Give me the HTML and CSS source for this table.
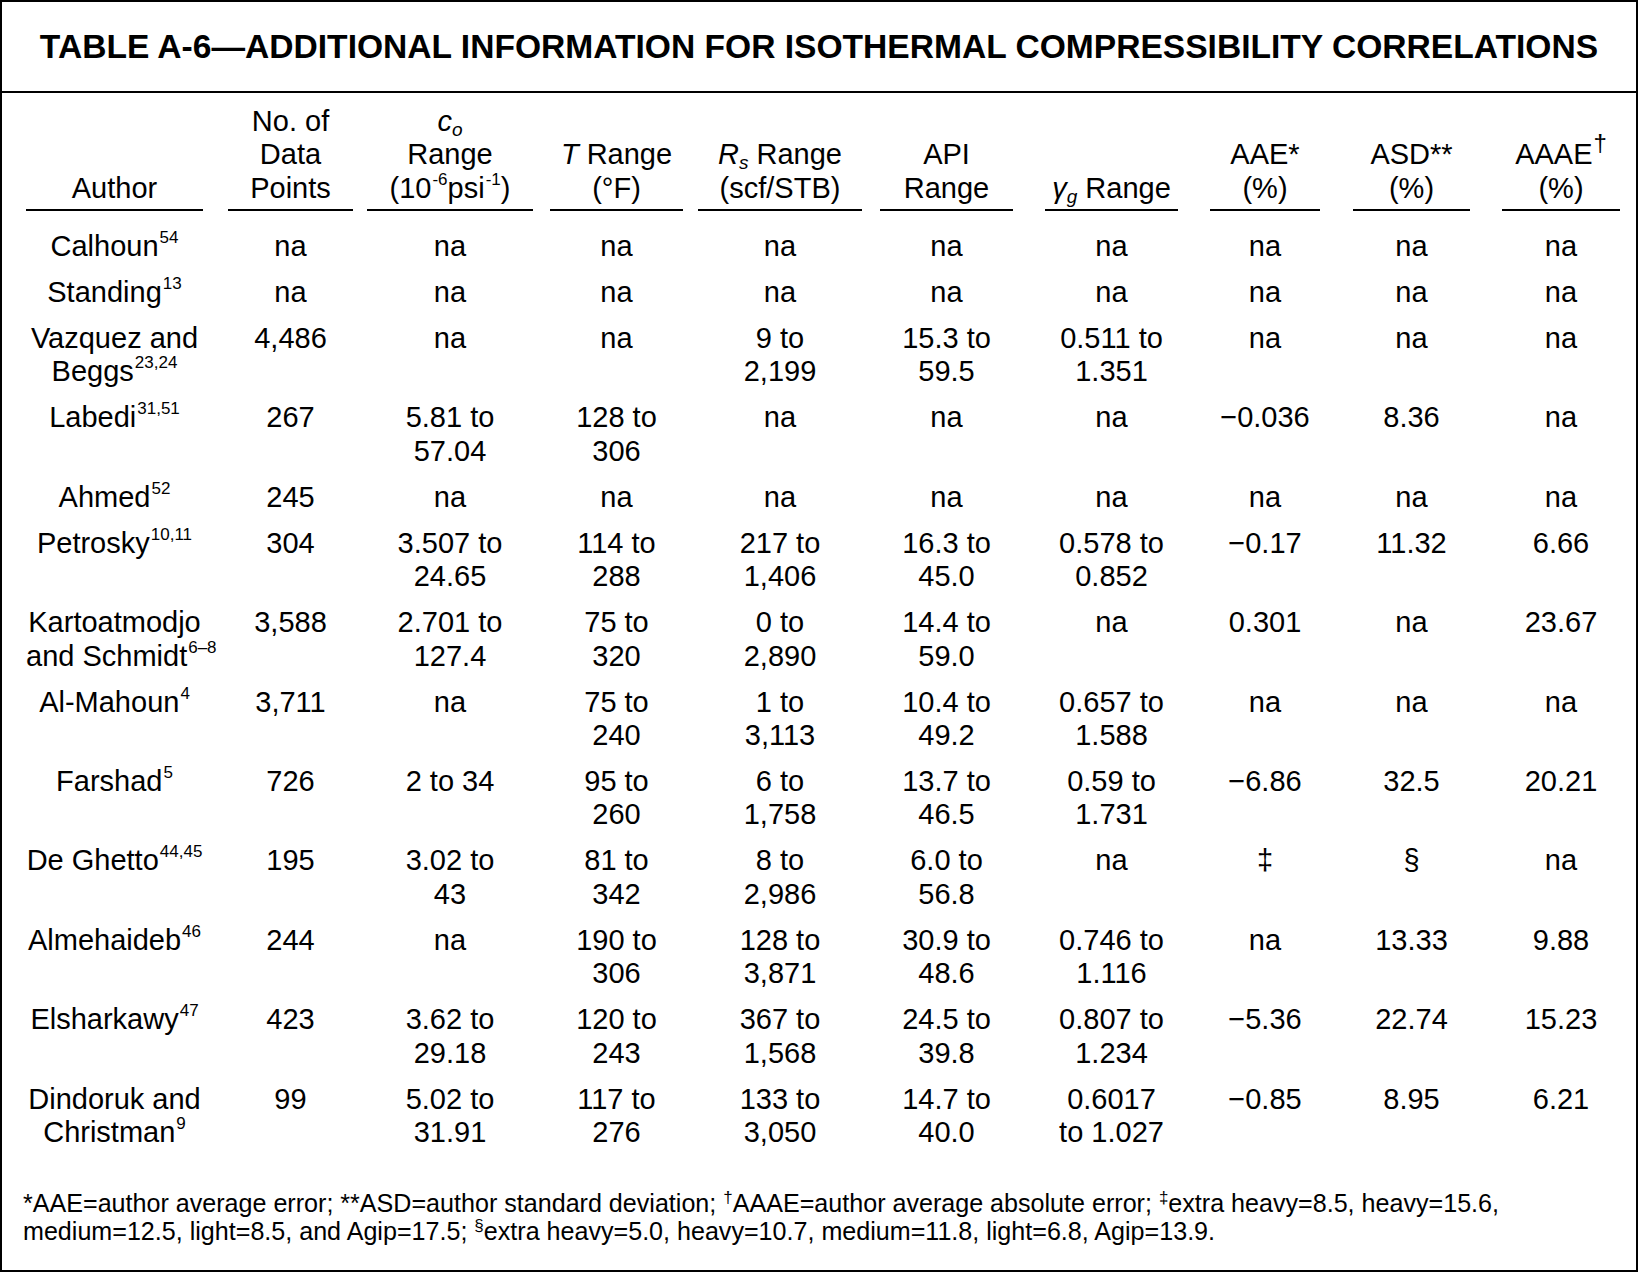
FILE: index.html
```html
<!DOCTYPE html>
<html lang="en">

<head>
    <meta charset="UTF-8">
    <title>Table A-6 - Isothermal Compressibility Correlations</title>
    <link rel="stylesheet" href="styles.css">
</head>

<body>
    <div class="sheet">
        <h1 class="sheet-title">TABLE A-6—ADDITIONAL INFORMATION FOR ISOTHERMAL COMPRESSIBILITY CORRELATIONS</h1>

        <div class="sheet-table">
            <table class="data">
                <colgroup>
                    <col class="c-author">
                    <col class="c-points">
                    <col class="c-co">
                    <col class="c-t">
                    <col class="c-rs">
                    <col class="c-api">
                    <col class="c-gamma">
                    <col class="c-aae">
                    <col class="c-asd">
                    <col class="c-aaae">
                </colgroup>
                <thead>
                    <tr>
                        <th><div class="hd">Author</div></th>
                        <th><div class="hd">No. of<br>Data<br>Points</div></th>
                        <th><div class="hd"><i>c<sub>o</sub></i><br>Range<br>(10<sup>-6</sup>psi<sup>-1</sup>)</div></th>
                        <th><div class="hd"><i>T</i> Range<br>(°F)</div></th>
                        <th><div class="hd"><i>R<sub>s</sub></i> Range<br>(scf/STB)</div></th>
                        <th><div class="hd">API<br>Range</div></th>
                        <th><div class="hd"><i>γ<sub>g</sub></i> Range</div></th>
                        <th><div class="hd">AAE*<br>(%)</div></th>
                        <th><div class="hd">ASD**<br>(%)</div></th>
                        <th><div class="hd">AAAE<sup class="mark">†</sup><br>(%)</div></th>
                    </tr>
                </thead>
                <tbody>
                    <tr>
                        <td>Calhoun<sup>54</sup></td>
                        <td>na</td><td>na</td><td>na</td><td>na</td><td>na</td><td>na</td><td>na</td><td>na</td><td>na</td>
                    </tr>
                    <tr>
                        <td>Standing<sup>13</sup></td>
                        <td>na</td><td>na</td><td>na</td><td>na</td><td>na</td><td>na</td><td>na</td><td>na</td><td>na</td>
                    </tr>
                    <tr>
                        <td>Vazquez and<br>Beggs<sup>23,24</sup></td>
                        <td>4,486</td>
                        <td>na</td>
                        <td>na</td>
                        <td>9 to<br>2,199</td>
                        <td>15.3 to<br>59.5</td>
                        <td>0.511 to<br>1.351</td>
                        <td>na</td>
                        <td>na</td>
                        <td>na</td>
                    </tr>
                    <tr>
                        <td>Labedi<sup>31,51</sup></td>
                        <td>267</td>
                        <td>5.81 to<br>57.04</td>
                        <td>128 to<br>306</td>
                        <td>na</td>
                        <td>na</td>
                        <td>na</td>
                        <td>−0.036</td>
                        <td>8.36</td>
                        <td>na</td>
                    </tr>
                    <tr>
                        <td>Ahmed<sup>52</sup></td>
                        <td>245</td>
                        <td>na</td><td>na</td><td>na</td><td>na</td><td>na</td><td>na</td><td>na</td><td>na</td>
                    </tr>
                    <tr>
                        <td>Petrosky<sup>10,11</sup></td>
                        <td>304</td>
                        <td>3.507 to<br>24.65</td>
                        <td>114 to<br>288</td>
                        <td>217 to<br>1,406</td>
                        <td>16.3 to<br>45.0</td>
                        <td>0.578 to<br>0.852</td>
                        <td>−0.17</td>
                        <td>11.32</td>
                        <td>6.66</td>
                    </tr>
                    <tr>
                        <td>Kartoatmodjo<br>and Schmidt<sup>6–8</sup></td>
                        <td>3,588</td>
                        <td>2.701 to<br>127.4</td>
                        <td>75 to<br>320</td>
                        <td>0 to<br>2,890</td>
                        <td>14.4 to<br>59.0</td>
                        <td>na</td>
                        <td>0.301</td>
                        <td>na</td>
                        <td>23.67</td>
                    </tr>
                    <tr>
                        <td>Al-Mahoun<sup>4</sup></td>
                        <td>3,711</td>
                        <td>na</td>
                        <td>75 to<br>240</td>
                        <td>1 to<br>3,113</td>
                        <td>10.4 to<br>49.2</td>
                        <td>0.657 to<br>1.588</td>
                        <td>na</td>
                        <td>na</td>
                        <td>na</td>
                    </tr>
                    <tr>
                        <td>Farshad<sup>5</sup></td>
                        <td>726</td>
                        <td>2 to 34</td>
                        <td>95 to<br>260</td>
                        <td>6 to<br>1,758</td>
                        <td>13.7 to<br>46.5</td>
                        <td>0.59 to<br>1.731</td>
                        <td>−6.86</td>
                        <td>32.5</td>
                        <td>20.21</td>
                    </tr>
                    <tr>
                        <td>De Ghetto<sup>44,45</sup></td>
                        <td>195</td>
                        <td>3.02 to<br>43</td>
                        <td>81 to<br>342</td>
                        <td>8 to<br>2,986</td>
                        <td>6.0 to<br>56.8</td>
                        <td>na</td>
                        <td>‡</td>
                        <td>§</td>
                        <td>na</td>
                    </tr>
                    <tr>
                        <td>Almehaideb<sup>46</sup></td>
                        <td>244</td>
                        <td>na</td>
                        <td>190 to<br>306</td>
                        <td>128 to<br>3,871</td>
                        <td>30.9 to<br>48.6</td>
                        <td>0.746 to<br>1.116</td>
                        <td>na</td>
                        <td>13.33</td>
                        <td>9.88</td>
                    </tr>
                    <tr>
                        <td>Elsharkawy<sup>47</sup></td>
                        <td>423</td>
                        <td>3.62 to<br>29.18</td>
                        <td>120 to<br>243</td>
                        <td>367 to<br>1,568</td>
                        <td>24.5 to<br>39.8</td>
                        <td>0.807 to<br>1.234</td>
                        <td>−5.36</td>
                        <td>22.74</td>
                        <td>15.23</td>
                    </tr>
                    <tr>
                        <td>Dindoruk and<br>Christman<sup>9</sup></td>
                        <td>99</td>
                        <td>5.02 to<br>31.91</td>
                        <td>117 to<br>276</td>
                        <td>133 to<br>3,050</td>
                        <td>14.7 to<br>40.0</td>
                        <td>0.6017<br>to 1.027</td>
                        <td>−0.85</td>
                        <td>8.95</td>
                        <td>6.21</td>
                    </tr>
                </tbody>
            </table>
        </div>

        <p class="sheet-notes">
            *AAE=author average error; **ASD=author standard deviation; <sup>†</sup>AAAE=author average absolute error; <sup>‡</sup>extra heavy=8.5, heavy=15.6,<br>
            medium=12.5, light=8.5, and Agip=17.5; <sup>§</sup>extra heavy=5.0, heavy=10.7, medium=11.8, light=6.8, Agip=13.9.
        </p>
    </div>
</body>

</html>
```

FILE: styles.css
```css
* {
    margin: 0;
    padding: 0;
    box-sizing: border-box;
}

body {
    font-family: 'Liberation Sans', Arial, Helvetica, sans-serif;
    color: #000;
    background: #fff;
}

.sheet {
    width: 1638px;
    height: 1272px;
    border: 2px solid #000;
    display: flex;
    flex-direction: column;
}

.sheet-title {
    height: 91px;
    border-bottom: 2px solid #000;
    display: flex;
    align-items: center;
    justify-content: center;
    font-size: 33.6px;
    font-weight: bold;
    white-space: nowrap;
}

.sheet-table {
    padding: 0 16px 0 24px;
}

/* table */
.data {
    width: 1594px;
    table-layout: fixed;
    border-collapse: separate;
    border-spacing: 0;
    font-size: 29px;
    line-height: 33.4px;
    text-align: center;
}

.c-author { width: 177px; }
.c-points { width: 150px; }
.c-co { width: 180px; }
.c-t { width: 150px; }
.c-rs { width: 179px; }
.c-api { width: 151px; }
.c-gamma { width: 165px; }
.c-aae { width: 142px; }
.c-asd { width: 150px; }
.c-aaae { width: 150px; }

/* gaps between the underlined columns */
.data tr > :nth-child(2) { padding-left: 25px; }
.data tr > :nth-child(3) { padding-left: 14px; }
.data tr > :nth-child(4) { padding-left: 17px; }
.data tr > :nth-child(5) { padding-left: 15px; }
.data tr > :nth-child(6) { padding-left: 18px; }
.data tr > :nth-child(7) { padding-left: 32px; }
.data tr > :nth-child(8) { padding-left: 32px; }
.data tr > :nth-child(9) { padding-left: 33px; }
.data tr > :nth-child(10) { padding-left: 32px; }

.data th {
    font-weight: normal;
    vertical-align: bottom;
    padding-top: 12px;
}

.hd {
    border-bottom: 2px solid #000;
    padding-bottom: 4px;
}

.data td {
    vertical-align: top;
    padding-top: 6.3px;
    padding-bottom: 6.3px;
    white-space: nowrap;
}

.data tbody tr:first-child td {
    padding-top: 18.8px;
}

sup,
sub {
    position: relative;
    vertical-align: baseline;
    line-height: 0;
}

.data sup {
    font-size: 17px;
    top: -13px;
    margin-left: 1px;
}

.data sub {
    font-size: 19px;
    top: 5px;
}

.data sup.mark {
    font-size: 24px;
    top: -13px;
}

/* footnotes */
.sheet-notes {
    padding: 33px 16px 0 21px;
    font-size: 25.1px;
    line-height: 28.5px;
}

.sheet-notes sup {
    font-size: 17px;
    top: -9px;
}
```
